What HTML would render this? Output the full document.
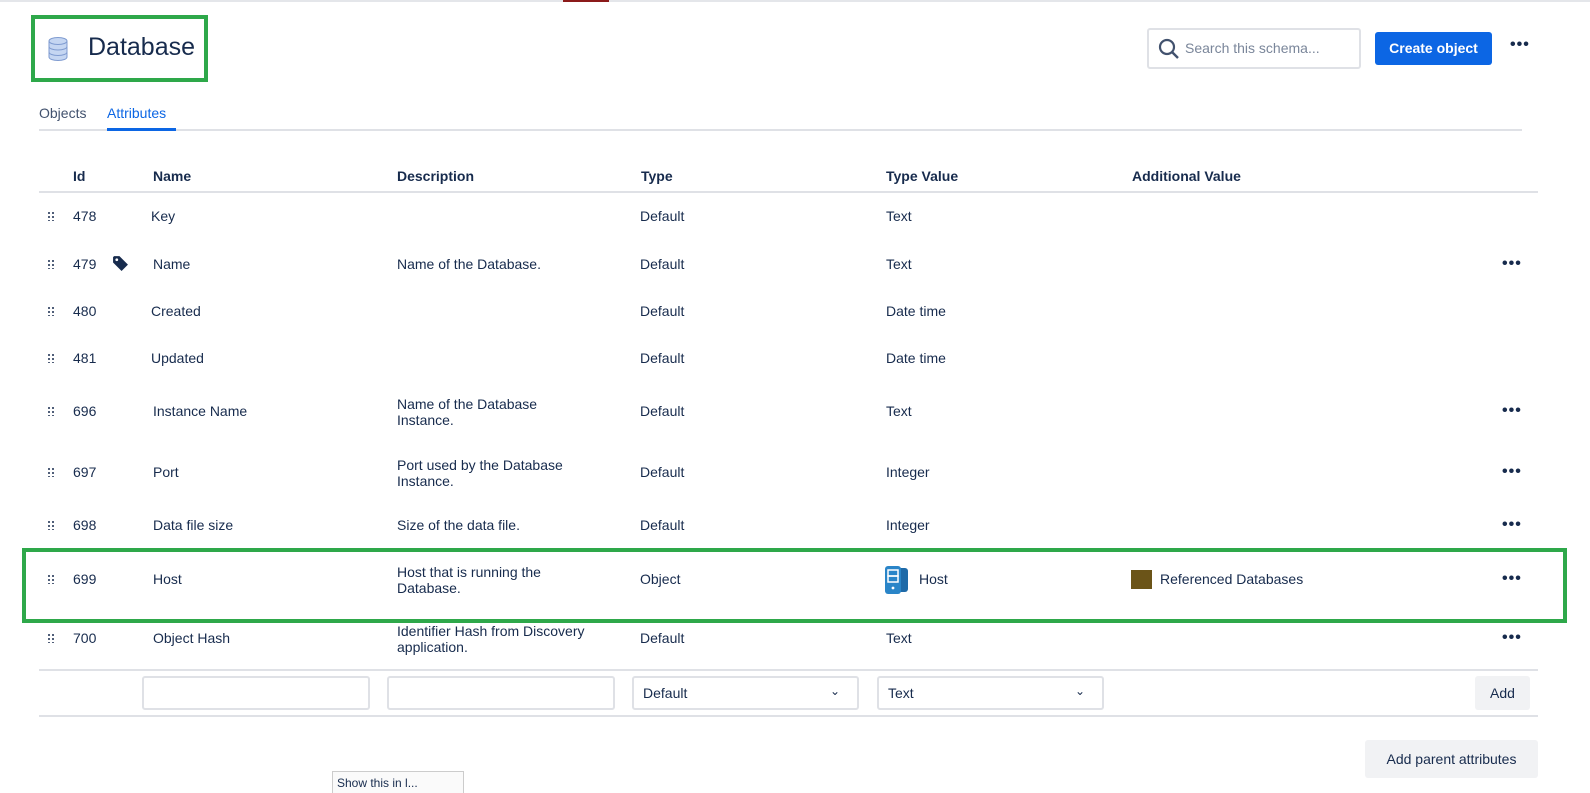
<!DOCTYPE html>
<html><head><style>
*{margin:0;padding:0;box-sizing:border-box}
body{width:1590px;height:793px;background:#fff;font-family:"Liberation Sans",sans-serif;color:#172b4d;font-size:14px;position:relative;overflow:hidden}
.a{position:absolute;white-space:nowrap}
.c{position:absolute;line-height:16px}
.h{font-weight:bold}
.dots{position:absolute;left:1502px;font-weight:bold;font-size:16px;letter-spacing:1px}
.g{position:absolute;left:47px;width:8px;height:10px;background:radial-gradient(circle,#42526e 1px,transparent 1.2px) 0 0/4px 4px}
.inp{position:absolute;top:676px;height:34px;border:2px solid #dfe1e6;border-radius:3px;background:#fff}
</style></head><body>
<div class="a" style="left:0;top:0;width:1590px;height:2px;background:#e4e6ea"></div>
<div class="a" style="left:563px;top:0;width:46px;height:2px;background:#8b1a1a"></div>
<div class="a" style="left:31px;top:15px;width:177px;height:67px;border:4px solid #2ea84a"></div>
<svg class="a" style="left:47px;top:36px" width="22" height="26" viewBox="0 0 22 26"><g fill="#c5d6f2" stroke="#7f9bd0" stroke-width="1"><path d="M2 5v16c0 2 4 3.5 9 3.5s9-1.5 9-3.5V5"/><ellipse cx="11" cy="5" rx="9" ry="3.5"/><path d="M2 10.5c0 2 4 3.5 9 3.5s9-1.5 9-3.5M2 16c0 2 4 3.5 9 3.5s9-1.5 9-3.5" fill="none"/></g></svg>
<div class="a" style="left:88px;top:33px;font-size:25px">Database</div>
<div class="a" style="left:1147px;top:28px;width:214px;height:41px;border:2px solid #dfe1e6;border-radius:3px"></div>
<svg class="a" style="left:1158px;top:38px" width="22" height="22" viewBox="0 0 22 22"><circle cx="9" cy="9" r="7" fill="none" stroke="#42526e" stroke-width="2.2"/><path d="M14 14l6 6" stroke="#42526e" stroke-width="2.4"/></svg>
<div class="a" style="left:1185px;top:40px;color:#7a869a">Search this schema...</div>
<div class="a" style="left:1375px;top:32px;width:117px;height:33px;background:#0c66e4;border-radius:3px;color:#fff;font-weight:bold;text-align:center;line-height:33px">Create object</div>
<div class="a" style="left:1510px;top:36px;font-weight:bold;font-size:16px;letter-spacing:1px">•••</div>
<div class="a" style="left:39px;top:105px;color:#42526e">Objects</div>
<div class="a" style="left:107px;top:105px;color:#0c66e4">Attributes</div>
<div class="a" style="left:39px;top:129px;width:1483px;height:2px;background:#dfe1e6"></div>
<div class="a" style="left:107px;top:128px;width:69px;height:3px;background:#0c66e4"></div>
<div class="a h" style="left:73px;top:168px">Id</div>
<div class="a h" style="left:153px;top:168px">Name</div>
<div class="a h" style="left:397px;top:168px">Description</div>
<div class="a h" style="left:641px;top:168px">Type</div>
<div class="a h" style="left:886px;top:168px">Type Value</div>
<div class="a h" style="left:1132px;top:168px">Additional Value</div>
<div class="a" style="left:39px;top:191px;width:1499px;height:2px;background:#dfe1e6"></div>

<div class="g" style="top:211px"></div><div class="a" style="left:73px;top:208px">478</div><div class="a" style="left:151px;top:208px">Key</div><div class="a" style="left:640px;top:208px">Default</div><div class="a" style="left:886px;top:208px">Text</div>

<div class="g" style="top:259px"></div><div class="a" style="left:73px;top:256px">479</div>
<svg class="a" style="left:112px;top:255px" width="17" height="17" viewBox="0 0 16 16"><path d="M1 2v5l8 8 6-6-8-8H2z" fill="#172b4d"/><circle cx="4.5" cy="4.5" r="1.3" fill="#fff"/></svg>
<div class="a" style="left:153px;top:256px">Name</div><div class="a" style="left:397px;top:256px">Name of the Database.</div><div class="a" style="left:640px;top:256px">Default</div><div class="a" style="left:886px;top:256px">Text</div><div class="dots" style="top:255px">•••</div>

<div class="g" style="top:306px"></div><div class="a" style="left:73px;top:303px">480</div><div class="a" style="left:151px;top:303px">Created</div><div class="a" style="left:640px;top:303px">Default</div><div class="a" style="left:886px;top:303px">Date time</div>

<div class="g" style="top:353px"></div><div class="a" style="left:73px;top:350px">481</div><div class="a" style="left:151px;top:350px">Updated</div><div class="a" style="left:640px;top:350px">Default</div><div class="a" style="left:886px;top:350px">Date time</div>

<div class="g" style="top:406px"></div><div class="a" style="left:73px;top:403px">696</div><div class="a" style="left:153px;top:403px">Instance Name</div><div class="c" style="left:397px;top:396px">Name of the Database<br>Instance.</div><div class="a" style="left:640px;top:403px">Default</div><div class="a" style="left:886px;top:403px">Text</div><div class="dots" style="top:402px">•••</div>

<div class="g" style="top:467px"></div><div class="a" style="left:73px;top:464px">697</div><div class="a" style="left:153px;top:464px">Port</div><div class="c" style="left:397px;top:457px">Port used by the Database<br>Instance.</div><div class="a" style="left:640px;top:464px">Default</div><div class="a" style="left:886px;top:464px">Integer</div><div class="dots" style="top:463px">•••</div>

<div class="g" style="top:520px"></div><div class="a" style="left:73px;top:517px">698</div><div class="a" style="left:153px;top:517px">Data file size</div><div class="a" style="left:397px;top:517px">Size of the data file.</div><div class="a" style="left:640px;top:517px">Default</div><div class="a" style="left:886px;top:517px">Integer</div><div class="dots" style="top:516px">•••</div>

<div class="a" style="left:22px;top:548px;width:1545px;height:75px;border:4px solid #2ea84a"></div>
<div class="g" style="top:574px"></div><div class="a" style="left:73px;top:571px">699</div><div class="a" style="left:153px;top:571px">Host</div><div class="c" style="left:397px;top:564px">Host that is running the<br>Database.</div><div class="a" style="left:640px;top:571px">Object</div>
<svg class="a" style="left:884px;top:566px" width="26" height="28" viewBox="0 0 26 28"><rect x="14" y="2" width="10" height="24" rx="3" fill="#1e6aa8"/><rect x="1" y="0" width="16" height="28" rx="3" fill="#2a85c8"/><rect x="4" y="4" width="10" height="6" fill="none" stroke="#fff" stroke-width="1.5"/><rect x="4" y="10" width="10" height="6" fill="none" stroke="#fff" stroke-width="1.5"/><circle cx="9" cy="22" r="1.4" fill="#fff"/></svg>
<div class="a" style="left:919px;top:571px">Host</div>
<div class="a" style="left:1131px;top:570px;width:21px;height:19px;background:#6b5418"></div>
<div class="a" style="left:1160px;top:571px">Referenced Databases</div><div class="dots" style="top:570px">•••</div>

<div class="g" style="top:633px"></div><div class="a" style="left:73px;top:630px">700</div><div class="a" style="left:153px;top:630px">Object Hash</div><div class="c" style="left:397px;top:623px">Identifier Hash from Discovery<br>application.</div><div class="a" style="left:640px;top:630px">Default</div><div class="a" style="left:886px;top:630px">Text</div><div class="dots" style="top:629px">•••</div>

<div class="a" style="left:39px;top:669px;width:1499px;height:2px;background:#dfe1e6"></div>
<div class="inp" style="left:142px;width:228px"></div>
<div class="inp" style="left:387px;width:228px"></div>
<div class="inp" style="left:632px;width:227px"></div><div class="a" style="left:643px;top:685px">Default</div><div class="a" style="left:830px;top:684px;font-size:12px">⌄</div>
<div class="inp" style="left:877px;width:227px"></div><div class="a" style="left:888px;top:685px">Text</div><div class="a" style="left:1075px;top:684px;font-size:12px">⌄</div>
<div class="a" style="left:1475px;top:676px;width:55px;height:34px;background:#f1f2f4;border-radius:3px;text-align:center;line-height:34px">Add</div>
<div class="a" style="left:39px;top:715px;width:1499px;height:2px;background:#dfe1e6"></div>
<div class="a" style="left:1365px;top:740px;width:173px;height:38px;background:#f1f2f4;border-radius:3px;text-align:center;line-height:38px">Add parent attributes</div>
<div class="a" style="left:332px;top:771px;width:132px;height:22px;border:1px solid #ccc;border-bottom:none;background:#fafafa;font-size:12px;padding:4px;overflow:hidden">Show this in l...</div>
</body></html>
